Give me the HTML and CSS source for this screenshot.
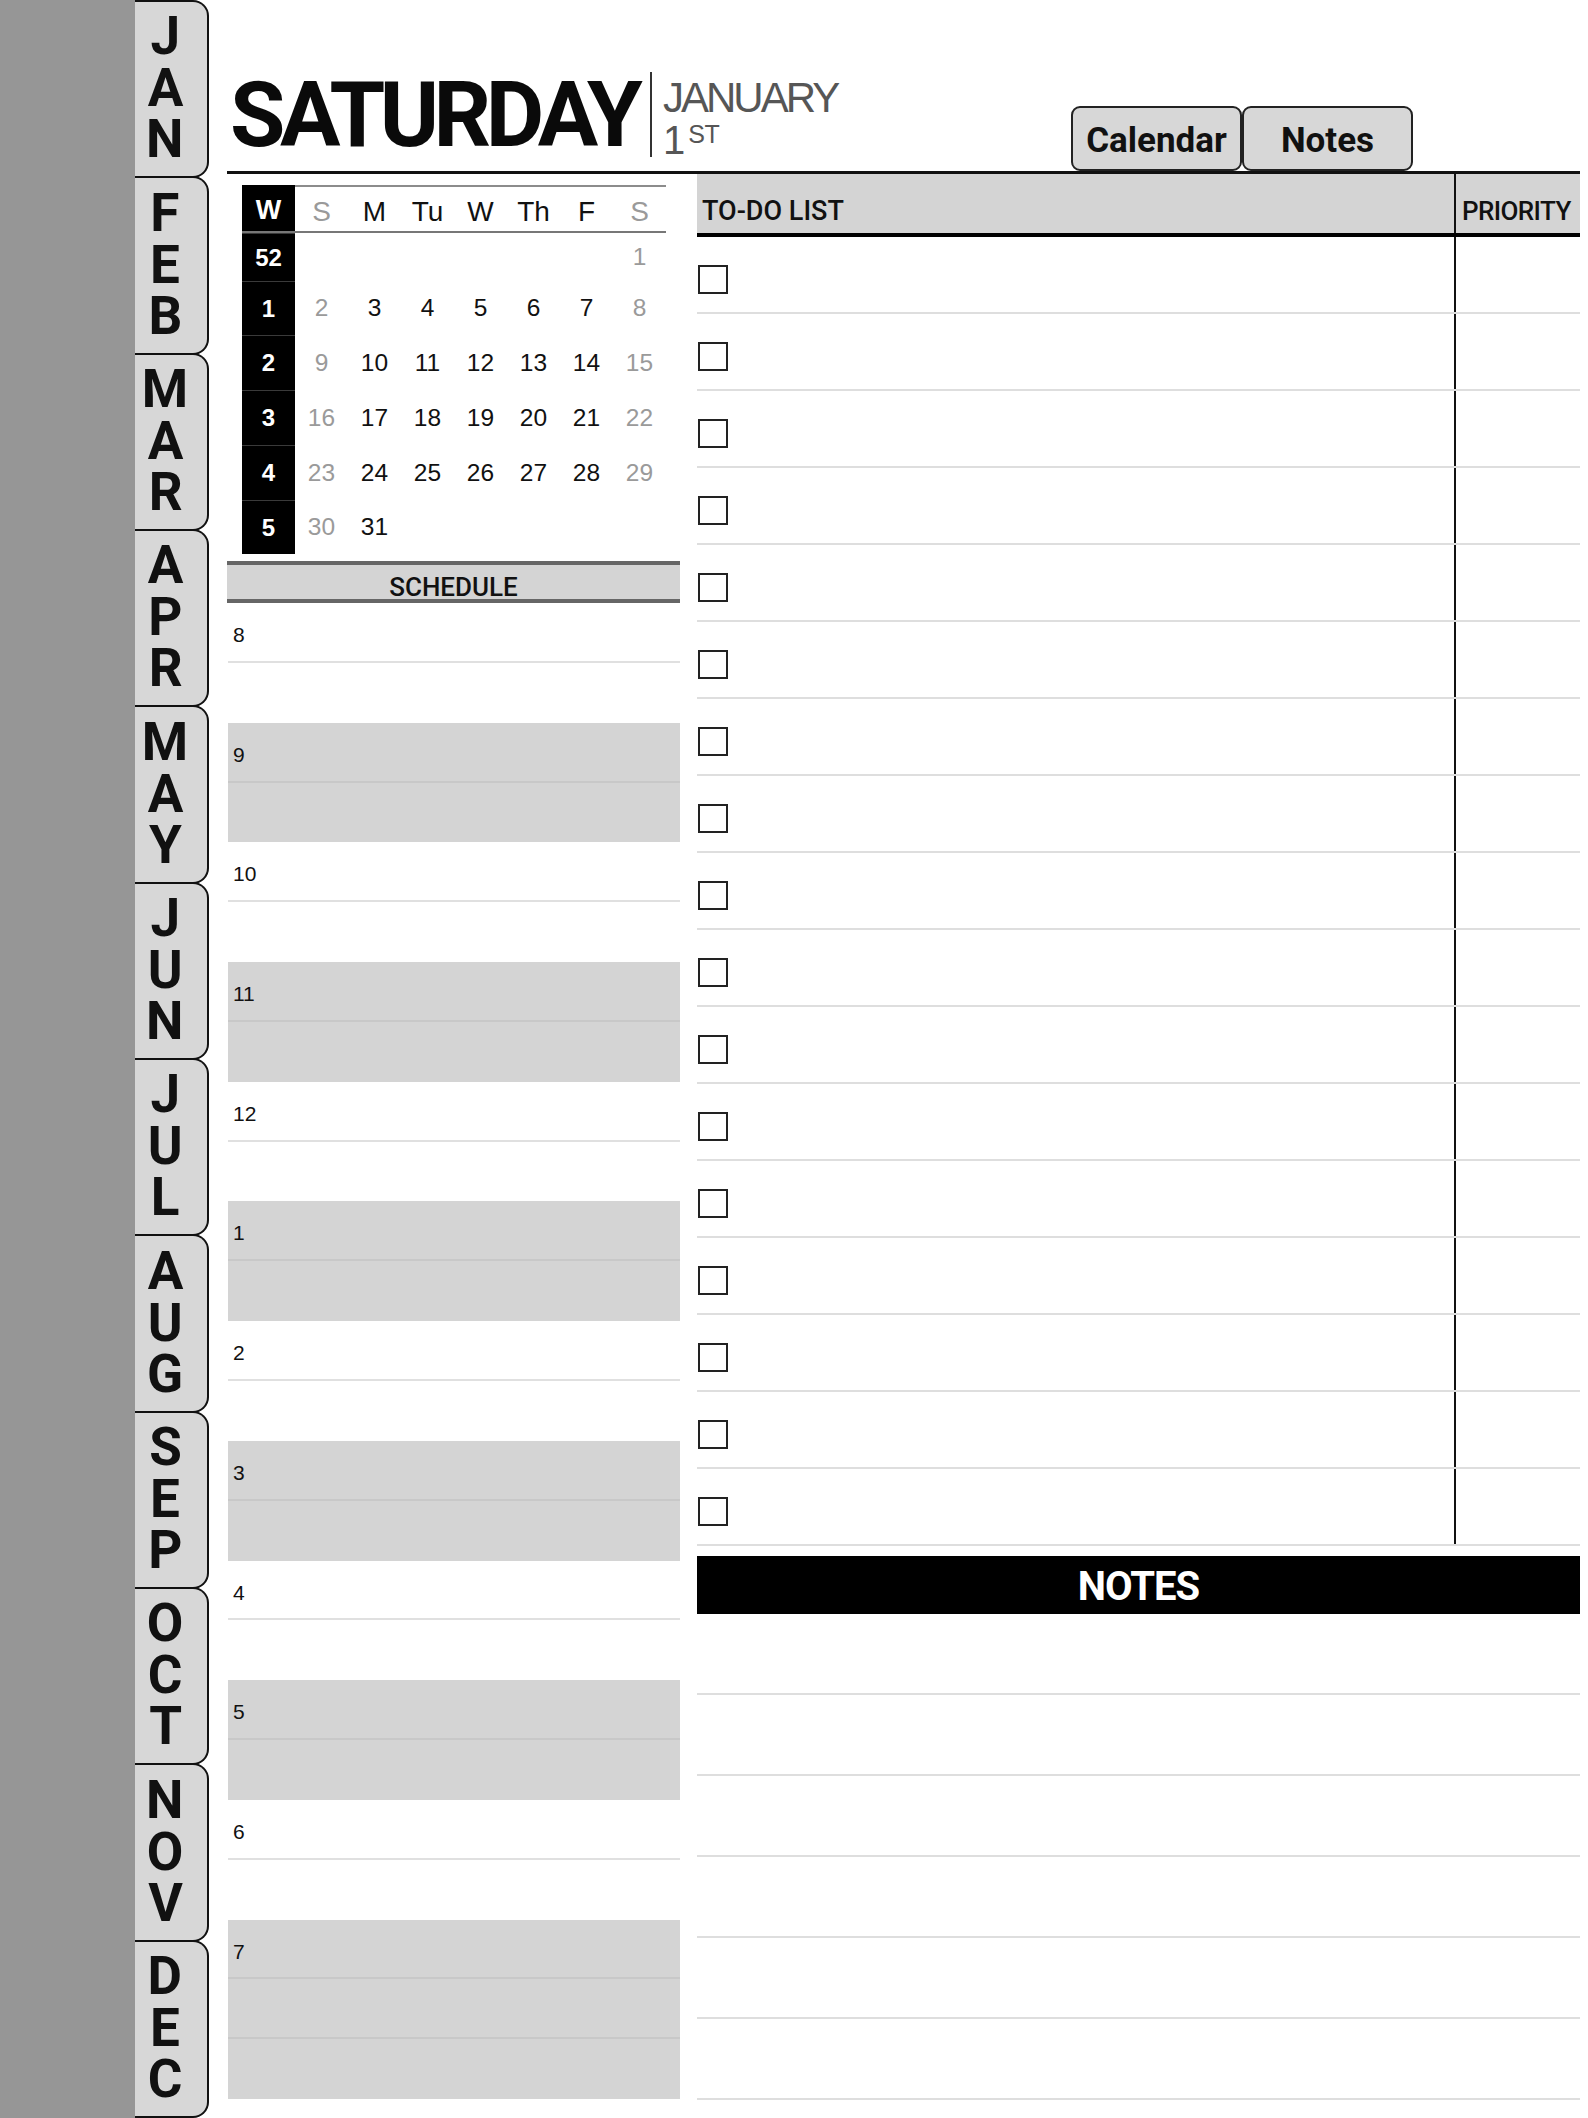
FILE: index.html
```html
<!DOCTYPE html>
<html lang="en">
<head>
<meta charset="utf-8">
<title>Daily Planner - Saturday January 1st</title>
<link rel="stylesheet" href="styles.css">
</head>
<body>
<div class="page">
  <aside class="sidebar"></aside>
  <nav class="months">
    <div class="month"><span class="mlabel">JAN</span></div>
    <div class="month"><span class="mlabel">FEB</span></div>
    <div class="month"><span class="mlabel">MAR</span></div>
    <div class="month"><span class="mlabel">APR</span></div>
    <div class="month"><span class="mlabel">MAY</span></div>
    <div class="month"><span class="mlabel">JUN</span></div>
    <div class="month"><span class="mlabel">JUL</span></div>
    <div class="month"><span class="mlabel">AUG</span></div>
    <div class="month"><span class="mlabel">SEP</span></div>
    <div class="month"><span class="mlabel">OCT</span></div>
    <div class="month"><span class="mlabel">NOV</span></div>
    <div class="month"><span class="mlabel">DEC</span></div>
  </nav>
  <main class="main">
    <header class="header">
      <h1 class="day">SATURDAY</h1>
      <div class="divider"></div>
      <div class="date">
        <div class="month-name">JANUARY</div>
        <div class="dnum">1<span class="suffix">ST</span></div>
      </div>
      <div class="views">
        <div class="view">Calendar</div>
        <div class="view">Notes</div>
      </div>
    </header>
    <div class="content">
      <section class="left">
        <div class="mini">
          <div class="wk top">W</div>
          <div class="hd we">S</div><div class="hd">M</div><div class="hd">Tu</div><div class="hd">W</div><div class="hd">Th</div><div class="hd">F</div><div class="hd we">S</div>

          <div class="wk">52</div>
          <div class="dc"></div><div class="dc"></div><div class="dc"></div><div class="dc"></div><div class="dc"></div><div class="dc"></div><div class="dc we">1</div>

          <div class="wk">1</div>
          <div class="dc we">2</div><div class="dc">3</div><div class="dc">4</div><div class="dc">5</div><div class="dc">6</div><div class="dc">7</div><div class="dc we">8</div>

          <div class="wk">2</div>
          <div class="dc we">9</div><div class="dc">10</div><div class="dc">11</div><div class="dc">12</div><div class="dc">13</div><div class="dc">14</div><div class="dc we">15</div>

          <div class="wk">3</div>
          <div class="dc we">16</div><div class="dc">17</div><div class="dc">18</div><div class="dc">19</div><div class="dc">20</div><div class="dc">21</div><div class="dc we">22</div>

          <div class="wk">4</div>
          <div class="dc we">23</div><div class="dc">24</div><div class="dc">25</div><div class="dc">26</div><div class="dc">27</div><div class="dc">28</div><div class="dc we">29</div>

          <div class="wk">5</div>
          <div class="dc we">30</div><div class="dc">31</div><div class="dc"></div><div class="dc"></div><div class="dc"></div><div class="dc"></div><div class="dc"></div>
        </div>
        <div class="sched-head">SCHEDULE</div>
        <div class="hours">
          <div class="hour"><div class="slot"><span class="hl">8</span></div><div class="slot"></div></div>
          <div class="hour shade"><div class="slot"><span class="hl">9</span></div><div class="slot"></div></div>
          <div class="hour"><div class="slot"><span class="hl">10</span></div><div class="slot"></div></div>
          <div class="hour shade"><div class="slot"><span class="hl">11</span></div><div class="slot"></div></div>
          <div class="hour"><div class="slot"><span class="hl">12</span></div><div class="slot"></div></div>
          <div class="hour shade"><div class="slot"><span class="hl">1</span></div><div class="slot"></div></div>
          <div class="hour"><div class="slot"><span class="hl">2</span></div><div class="slot"></div></div>
          <div class="hour shade"><div class="slot"><span class="hl">3</span></div><div class="slot"></div></div>
          <div class="hour"><div class="slot"><span class="hl">4</span></div><div class="slot"></div></div>
          <div class="hour shade"><div class="slot"><span class="hl">5</span></div><div class="slot"></div></div>
          <div class="hour"><div class="slot"><span class="hl">6</span></div><div class="slot"></div></div>
          <div class="hour shade"><div class="slot"><span class="hl">7</span></div><div class="slot"></div><div class="slot"></div></div>
        </div>
      </section>
      <section class="right">
        <div class="todo-head">
          <div class="th-task">TO-DO LIST</div>
          <div class="th-prio">PRIORITY</div>
        </div>
        <div class="todo">
          <div class="row"><div class="task"><div class="box"></div></div><div class="prio"></div></div>
          <div class="row"><div class="task"><div class="box"></div></div><div class="prio"></div></div>
          <div class="row"><div class="task"><div class="box"></div></div><div class="prio"></div></div>
          <div class="row"><div class="task"><div class="box"></div></div><div class="prio"></div></div>
          <div class="row"><div class="task"><div class="box"></div></div><div class="prio"></div></div>
          <div class="row"><div class="task"><div class="box"></div></div><div class="prio"></div></div>
          <div class="row"><div class="task"><div class="box"></div></div><div class="prio"></div></div>
          <div class="row"><div class="task"><div class="box"></div></div><div class="prio"></div></div>
          <div class="row"><div class="task"><div class="box"></div></div><div class="prio"></div></div>
          <div class="row"><div class="task"><div class="box"></div></div><div class="prio"></div></div>
          <div class="row"><div class="task"><div class="box"></div></div><div class="prio"></div></div>
          <div class="row"><div class="task"><div class="box"></div></div><div class="prio"></div></div>
          <div class="row"><div class="task"><div class="box"></div></div><div class="prio"></div></div>
          <div class="row"><div class="task"><div class="box"></div></div><div class="prio"></div></div>
          <div class="row"><div class="task"><div class="box"></div></div><div class="prio"></div></div>
          <div class="row"><div class="task"><div class="box"></div></div><div class="prio"></div></div>
          <div class="row"><div class="task"><div class="box"></div></div><div class="prio"></div></div>
        </div>
        <div class="notes-head">NOTES</div>
        <div class="notes">
          <div class="nline"></div>
          <div class="nline"></div>
          <div class="nline"></div>
          <div class="nline"></div>
          <div class="nline"></div>
          <div class="nline"></div>
        </div>
      </section>
    </div>
  </main>
</div>
</body>
</html>
```

FILE: styles.css
```css
html, body {
  margin: 0;
  padding: 0;
  overflow: hidden;
  background: #ffffff;
}

.page {
  display: flex;
  width: 1588px;
  height: 2118px;
  overflow: hidden;
  font-family: "Liberation Sans", Arial, sans-serif;
  color: #111;
}

/* ---------- left grey strip + month tabs ---------- */
.sidebar {
  width: 135px;
  flex: none;
  background: #969696;
}

.months {
  width: 74px;
  flex: none;
  display: flex;
  flex-direction: column;
  background: #ffffff;
}

.month {
  box-sizing: border-box;
  height: 178.33px;
  flex: none;
  margin-top: -2px;
  border: 2px solid #111;
  border-left: none;
  border-radius: 0 16px 16px 0;
  background: #d7d7d7;
  display: flex;
  align-items: center;
  justify-content: center;
  padding-right: 13px;
  padding-bottom: 13px;
}

.month:first-child {
  margin-top: 0;
}

.mlabel {
  writing-mode: vertical-rl;
  text-orientation: upright;
  font-family: Roboto, "Liberation Sans", sans-serif;
  font-weight: 700;
  font-size: 53px;
  line-height: 53px;
  letter-spacing: -10.5px;
  color: #111;
}

/* ---------- main ---------- */
.main {
  flex: 1;
  min-width: 0;
  padding: 0 8px 0 18px;
  display: flex;
  flex-direction: column;
}

.header {
  box-sizing: border-box;
  height: 174px;
  flex: none;
  border-bottom: 3px solid #111;
  display: flex;
  align-items: flex-start;
}

.day {
  margin: 71px 0 0 3px;
  width: 420px;
  flex: none;
  white-space: nowrap;
  font-family: Roboto, "Liberation Sans", sans-serif;
  font-weight: 700;
  font-size: 90px;
  line-height: 90px;
  letter-spacing: -5.5px;
  color: #0a0a0a;
}

.divider {
  width: 2px;
  height: 85px;
  margin-top: 72px;
  flex: none;
  background: #333;
}

.date {
  margin: 77px 0 0 11px;
  color: #565656;
  flex: none;
}

.month-name {
  font-size: 42px;
  line-height: 42px;
  letter-spacing: -3px;
}

.dnum {
  font-size: 40px;
  line-height: 30px;
}

.suffix {
  font-size: 25px;
  vertical-align: 11px;
  margin-left: 3px;
  letter-spacing: -0.5px;
}

.views {
  margin-left: auto;
  margin-right: 167px;
  align-self: flex-end;
  display: flex;
}

.view {
  box-sizing: border-box;
  width: 171px;
  height: 65px;
  border: 2px solid #222;
  border-radius: 9px;
  background: #d7d7d7;
  display: flex;
  align-items: center;
  justify-content: center;
  padding-top: 3px;
  font-family: Roboto, "Liberation Sans", sans-serif;
  font-weight: 700;
  font-size: 35px;
  color: #111;
}

/* ---------- content columns ---------- */
.content {
  display: flex;
  gap: 17px;
  flex: 1;
}

.left {
  width: 453px;
  flex: none;
  display: flex;
  flex-direction: column;
}

.right {
  flex: 1;
  display: flex;
  flex-direction: column;
}

/* ---------- mini calendar ---------- */
.mini {
  margin: 11px 0 0 15px;
  width: 424px;
  display: grid;
  grid-template-columns: repeat(8, 53px);
  grid-template-rows: 48px 48px 54px 55px 55px 55px 54px;
}

.mini > div {
  box-sizing: border-box;
  display: flex;
  align-items: center;
  justify-content: center;
}

.wk {
  background: #000;
  color: #fff;
  font-weight: 700;
  font-size: 24px;
  border-top: 1px solid #3a3a3a;
}

.wk.top {
  border-top: none;
  border-bottom: 2px solid #777;
  font-size: 27px;
  padding-top: 4px;
}

.hd {
  border-top: 2px solid #8c8c8c;
  border-bottom: 2px solid #777;
  font-size: 28px;
  padding-top: 5px;
  color: #111;
}

.dc {
  font-size: 24.5px;
  color: #111;
}

.mini .we {
  color: #9a9a9a;
}

/* ---------- schedule ---------- */
.sched-head {
  box-sizing: border-box;
  height: 42px;
  margin-top: 7px;
  border-top: 4px solid #666;
  border-bottom: 4px solid #666;
  background: #d4d4d4;
  text-align: center;
  padding-top: 9px;
  font-family: Roboto, "Liberation Sans", sans-serif;
  font-weight: 500;
  font-size: 26px;
  line-height: 26px;
  color: #111;
}

.hours {
  display: flex;
  flex-direction: column;
}

.hour {
  margin-left: 1px;
}

.hour.shade {
  background: #d4d4d4;
}

.slot {
  box-sizing: border-box;
  height: 59.85px;
}

.slot:not(:last-child) {
  border-bottom: 2px solid #e0e0e0;
}

.shade .slot:not(:last-child) {
  border-bottom-color: #c8c8c8;
}

.hl {
  display: block;
  padding: 21px 0 0 5px;
  font-size: 21px;
  line-height: 21px;
  color: #111;
}

/* ---------- to-do ---------- */
.todo-head {
  box-sizing: border-box;
  height: 63px;
  display: grid;
  grid-template-columns: 1fr 126px;
  background: #d4d4d4;
  border-bottom: 4px solid #000;
  font-family: Roboto, "Liberation Sans", sans-serif;
  font-weight: 500;
  font-size: 27px;
  line-height: 27px;
  color: #111;
}

.th-task {
  padding: 24px 0 0 5px;
}

.th-prio {
  border-left: 2px solid #111;
  padding: 24px 0 0 6px;
  font-size: 26px;
  letter-spacing: -0.6px;
  white-space: nowrap;
}

.todo {
  display: flex;
  flex-direction: column;
}

.row {
  box-sizing: border-box;
  height: 77px;
  display: grid;
  grid-template-columns: 1fr 126px;
  border-bottom: 2px solid #dedede;
}

.prio {
  border-left: 2px solid #111;
}

.box {
  box-sizing: border-box;
  width: 30px;
  height: 29px;
  margin: 28px 0 0 1px;
  border: 2px solid #222;
  background: #fff;
}

.notes-head {
  box-sizing: border-box;
  height: 58px;
  margin-top: 10px;
  background: #000;
  color: #fff;
  display: flex;
  align-items: center;
  justify-content: center;
  padding-top: 3px;
  font-family: Roboto, "Liberation Sans", sans-serif;
  font-weight: 700;
  font-size: 40px;
  letter-spacing: -1px;
}

.notes {
  display: flex;
  flex-direction: column;
}

.nline {
  box-sizing: border-box;
  height: 81px;
  border-bottom: 2px solid #dedede;
}
```
